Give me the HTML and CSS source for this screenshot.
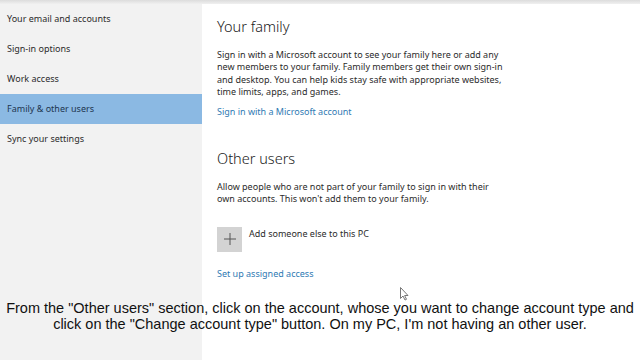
FILE: index.html
```html
<!DOCTYPE html>
<html lang="en">
<head>
  <meta charset="UTF-8">
  <title>Family &amp; other users</title>
  <link rel="stylesheet" href="styles.css">
</head>
<body>

  <div class="topo"></div>

  <div class="janela">
    <ul class="menu">
      <li>Your email and accounts</li>
      <li>Sign-in options</li>
      <li>Work access</li>
      <li class="ativo">Family &amp; other users</li>
      <li>Sync your settings</li>
    </ul>

    <div class="conteudo">
      <h2>Your family</h2>
      <p>Sign in with a Microsoft account to see your family here or add any new members to your family. Family members get their own sign-in and desktop. You can help kids stay safe with appropriate websites, time limits, apps, and games.</p>
      <a class="link" href="#">Sign in with a Microsoft account</a>

      <h2 class="outros">Other users</h2>
      <p>Allow people who are not part of your family to sign in with their own accounts. This won't add them to your family.</p>

      <div class="adicionar">
        <div class="mais">
          <svg width="12" height="12" viewBox="0 0 12 12">
            <path d="M6 0V12M0 6H12" stroke="#555" stroke-width="1" fill="none"/>
          </svg>
        </div>
        <span>Add someone else to this PC</span>
      </div>

      <a class="link" href="#">Set up assigned access</a>
    </div>
  </div>

  <svg class="cursor" width="10" height="14" viewBox="0 0 10 14">
    <path d="M0.5 0.5V11.5L3 9L5 13L6.5 12.3L4.6 8.5H8Z" fill="#fff" stroke="#777" stroke-width="1"/>
  </svg>

  <div class="legenda">
    From the "Other users" section, click on the account, whose you want to change account type and<br>
    click on the "Change account type" button. On my PC, I'm not having an other user.
  </div>

</body>
</html>
```

FILE: styles.css
```css
body {
  margin: 0;
  width: 640px;
  height: 360px;
  overflow: hidden;
  font-family: "Noto Sans", "Open Sans", sans-serif;
  background-color: #fff;
  color: #222;
  position: relative;
}

.topo {
  height: 4px;
  background: linear-gradient(#dcdcdc, #f0f0f0);
}

.janela {
  display: flex;
  height: 356px;
}

.menu {
  width: 202px;
  margin: 0;
  padding: 0;
  list-style: none;
  background-color: #f2f2f2;
}

.menu li {
  height: 30px;
  line-height: 30px;
  padding-left: 7px;
  font-size: 9px;
  color: #2b2b2b;
}

.menu li.ativo {
  background-color: #8bb9e3;
  color: #1d3550;
}

.conteudo {
  flex: 1;
  padding-left: 15px;
  padding-top: 12px;
}

h2 {
  margin: 0;
  font-size: 14.5px;
  font-weight: 300;
  color: #1a1a1a;
}

h2.outros {
  margin-top: 30px;
}

p {
  margin: 13px 0 7px 0;
  width: 290px;
  font-size: 9px;
  line-height: 12.3px;
  color: #2b2b2b;
}

.link {
  display: block;
  font-size: 9px;
  color: #2f7ab3;
  text-decoration: none;
}

.adicionar {
  display: flex;
  gap: 7px;
  margin: 21px 0 15px 0;
  font-size: 9px;
  color: #2b2b2b;
}

.mais {
  width: 25px;
  height: 25px;
  background-color: #d3d3d3;
  display: flex;
  align-items: center;
  justify-content: center;
}

.cursor {
  position: absolute;
  left: 400px;
  top: 287px;
}

.legenda {
  position: absolute;
  left: 0;
  right: 0;
  top: 300px;
  text-align: center;
  font-family: "Liberation Sans", Arial, sans-serif;
  font-size: 14.5px;
  line-height: 16px;
  color: #111;
}
```
